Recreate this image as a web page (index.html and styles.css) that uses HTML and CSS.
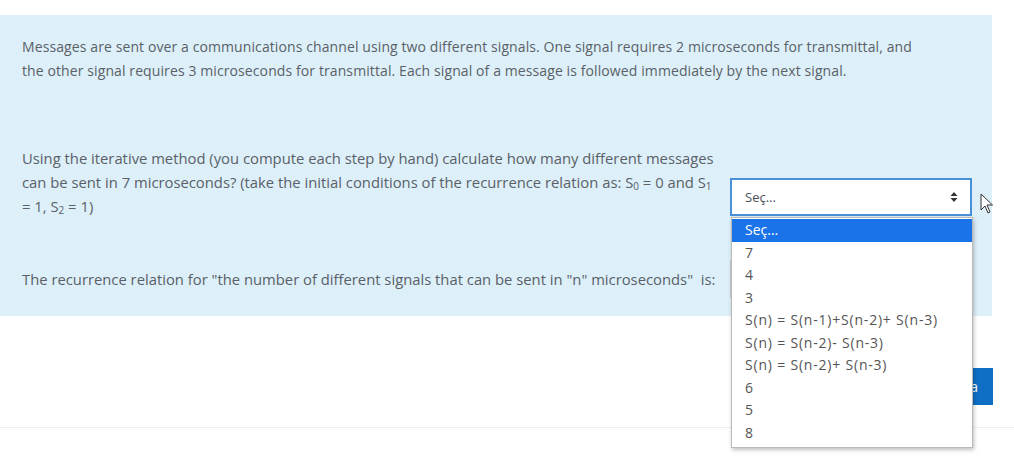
FILE: index.html
```html
<!DOCTYPE html>
<html lang="tr">
<head>
    <meta charset="UTF-8">
    <meta name="viewport" content="width=device-width, initial-scale=1.0">
    <title>Soru</title>
    <link rel="stylesheet" href="styles.css">
</head>
<body>
    <div class="que">
        <p class="intro">Messages are sent over a communications channel using two different signals. One signal requires 2 microseconds for transmittal, and the other signal requires 3 microseconds for transmittal. Each signal of a message is followed immediately by the next signal.</p>

        <div class="match">
            <div class="match-text">Using the iterative method (you compute each step by hand) calculate how many different messages can be sent in 7 microseconds? (take the initial conditions of the recurrence relation as: S<sub>0</sub> = 0 and S<sub>1</sub> = 1, S<sub>2</sub> = 1)</div>
            <div class="match-control first">
                <div class="select focused">
                    <span>Seç...</span>
                    <svg class="arrows" width="8" height="12" viewBox="0 0 8 12"><path d="M4 1 L7.5 5 H0.5 Z M4 11 L7.5 7 H0.5 Z" fill="#333"/></svg>
                </div>
                <ul class="options">
                    <li class="active">Seç...</li>
                    <li>7</li>
                    <li>4</li>
                    <li>3</li>
                    <li>S(n) = S(n-1)+S(n-2)+ S(n-3)</li>
                    <li>S(n) = S(n-2)- S(n-3)</li>
                    <li>S(n) = S(n-2)+ S(n-3)</li>
                    <li>6</li>
                    <li>5</li>
                    <li>8</li>
                </ul>
                <svg class="cursor" width="14" height="22" viewBox="0 0 14 22"><path d="M1 1 L1 17 L5 13 L8 20 L10 19 L7 12 L12.5 12 Z" fill="#fff" stroke="#333" stroke-width="1" stroke-linejoin="round"/></svg>
            </div>

            <div class="match-text">The recurrence relation for "the number of different signals that can be sent in "n" microseconds"&nbsp; is:</div>
            <div class="match-control">
                <div class="select">
                    <span>Seç...</span>
                </div>
            </div>
        </div>
    </div>

    <div class="nav">
        <button class="btn">Sonraki sayfa</button>
    </div>
    <div class="footer-line"></div>
</body>
</html>
```

FILE: styles.css
```css
html, body {
    min-height: 100%;
}
body {
    margin: 0;
    min-height: 459px;
    font-family: 'Open Sans', 'Liberation Sans', sans-serif;
    font-size: 14px;
    color: #5a6068;
    background: #fff;
}
.que {
    margin-top: 15px;
    width: 992px;
    box-sizing: border-box;
    background: #ddf0f9;
    padding: 20px 22px 18px 22px;
}
.intro {
    margin: 0 0 63px 0;
    max-width: 905px;
    line-height: 24px;
    letter-spacing: 0.1px;
}
.match {
    display: grid;
    grid-template-columns: 696px 242px;
    column-gap: 12px;
    row-gap: 42px;
    line-height: 24px;
}
.match-text {
    align-self: center;
    font-size: 14.8px;
}
.match-control {
    position: relative;
    height: 38px;
}
.match-control.first {
    align-self: end;
    margin-bottom: 2px;
}
sub {
    font-size: 10px;
    vertical-align: -2px;
    line-height: 0;
}
.select {
    box-sizing: border-box;
    height: 38px;
    width: 242px;
    background: #fff;
    border: 1px solid #c8ccd0;
    display: flex;
    align-items: center;
    justify-content: space-between;
    padding: 0 12px 0 14px;
    color: #495057;
    font-size: 13px;
}
.select.focused {
    border: 2px solid #4a90d9;
    padding-left: 13px;
}
.options {
    position: absolute;
    top: 39px;
    left: 1px;
    width: 240px;
    margin: 0;
    padding: 1px 0 3px 0;
    list-style: none;
    background: #fff;
    border: 1px solid #b9b9b9;
    box-shadow: 1px 2px 4px rgba(0, 0, 0, 0.25);
    z-index: 5;
    font-size: 14px;
    letter-spacing: 0.8px;
    color: #555;
}
.options li {
    height: 22.5px;
    line-height: 22.5px;
    padding-left: 13px;
}
.options li.active {
    background: #1a73e8;
    color: #fff;
    letter-spacing: 0;
}
.cursor {
    position: absolute;
    left: 250px;
    top: 15px;
}
.nav {
    width: 993px;
    display: flex;
    justify-content: flex-end;
    margin-top: 52px;
}
.btn {
    height: 37px;
    border: none;
    background: #0f6fc5;
    color: #fff;
    font-family: inherit;
    font-size: 14px;
    padding: 0 15px;
}
.footer-line {
    margin-top: 22px;
    border-top: 1px solid #eeeeee;
}
```
